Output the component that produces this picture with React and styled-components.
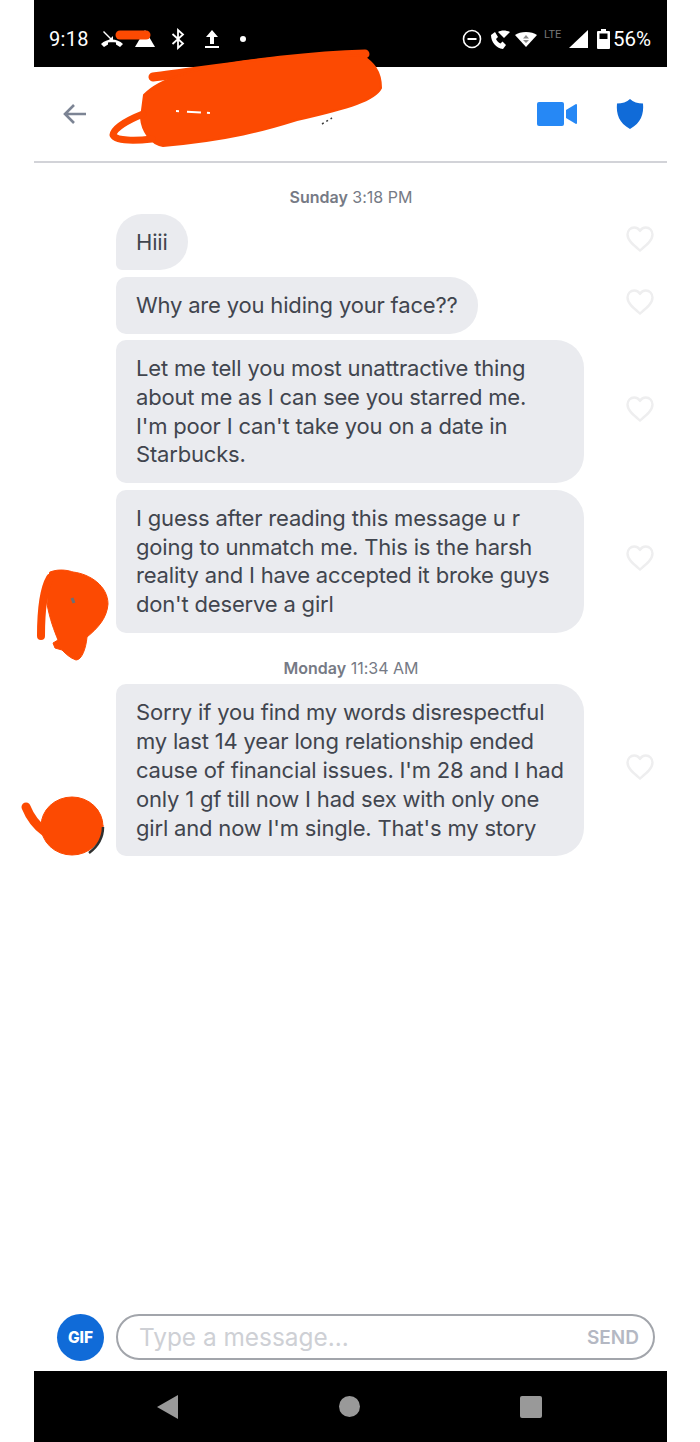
import React from 'react';
import styled, { createGlobalStyle } from 'styled-components';

const GlobalStyle = createGlobalStyle`
    html, body {
        margin: 0;
        padding: 0;
        background: #fff;
    }
    body {
        font-family: "Inter", "Liberation Sans", sans-serif;
        font-variant-ligatures: none;
    }
`;

const threads = [
    {
        day: 'Sunday',
        time: '3:18 PM',
        messages: [
            { id: 1, lines: ['Hiii'], first: true },
            { id: 2, lines: ['Why are you hiding your face??'] },
            {
                id: 3,
                lines: [
                    'Let me tell you most unattractive thing',
                    'about me as I can see you starred me.',
                    "I'm poor I can't take you on a date in",
                    'Starbucks.',
                ],
                wide: true,
            },
            {
                id: 4,
                lines: [
                    'I guess after reading this message u r',
                    'going to unmatch me. This is the harsh',
                    'reality and I have accepted it broke guys',
                    "don't deserve a girl",
                ],
                wide: true,
            },
        ],
    },
    {
        day: 'Monday',
        time: '11:34 AM',
        messages: [
            {
                id: 5,
                lines: [
                    'Sorry if you find my words disrespectful',
                    'my last 14 year long relationship ended',
                    "cause of financial issues. I'm 28 and I had",
                    'only 1 gf till now I had sex with only one',
                    "girl and now I'm single. That's my story",
                ],
                wide: true,
            },
        ],
    },
];

function HeartIcon() {
    return (
        <svg width="30" height="28" viewBox="0 0 30 28" fill="none">
            <path
                d="M15 25.5 C9 20.5 2.5 15.5 2.5 9.5 C2.5 5.5 5.5 2.5 9.2 2.5 C11.6 2.5 13.8 3.8 15 6 C16.2 3.8 18.4 2.5 20.8 2.5 C24.5 2.5 27.5 5.5 27.5 9.5 C27.5 15.5 21 20.5 15 25.5 Z"
                stroke="#eeeeef"
                strokeWidth="2.4"
                strokeLinejoin="round"
            />
        </svg>
    );
}

function App() {
    return (
        <Page>
            <GlobalStyle />
            <Phone>
                <StatusBar>
                    <StatusGroup>
                        <Clock>9:18</Clock>
                        <StatusIcon $left={11}>
                            <svg width="56" height="20" viewBox="0 0 56 20" fill="#fff">
                                <path d="M1 15 C7 9 17 9 23 15 L20 18 L16 15.5 V13.5 C14 13 10 13 8 13.5 V15.5 L4 18 Z" />
                                <path d="M4 2 L11 9 L13 7 V12 H8 L10 10 L3 3 Z" />
                                <path d="M35 18 L45 1 L55 18 Z" />
                            </svg>
                        </StatusIcon>
                        <StatusIcon $left={15}>
                            <svg width="14" height="22" viewBox="0 0 14 22" fill="none">
                                <path d="M1.5 6 L12 15.5 L7 20 V2 L12 6.5 L1.5 16" stroke="#fff" strokeWidth="1.8" />
                            </svg>
                        </StatusIcon>
                        <StatusIcon $left={19}>
                            <svg width="16" height="20" viewBox="0 0 16 20" fill="#fff">
                                <path d="M8 1 L14 8 L10 8 L10 15 L6 15 L6 8 L2 8 Z" />
                                <rect x="1" y="17" width="14" height="2" />
                            </svg>
                        </StatusIcon>
                        <Dot />
                    </StatusGroup>
                    <StatusGroup>
                        <svg width="20" height="20" viewBox="0 0 20 20" fill="none">
                            <circle cx="10" cy="10" r="8.5" stroke="#fff" strokeWidth="1.6" />
                            <rect x="5.5" y="9" width="9" height="2" fill="#fff" />
                        </svg>
                        <StatusIcon $left={8}>
                            <svg width="48" height="20" viewBox="0 0 48 20" fill="#fff">
                                <path d="M1 6 L5 3 L8 8 L6 10 C7 12 8.5 13.5 10.5 14.5 L12.5 12.5 L16 16 L13 20 C6 19 1 13 1 6 Z" />
                                <path d="M8 3 C11 1 16 1 20 3 L14 9 Z" />
                                <path d="M25 6 C30 2 42 2 47 6 L36 18 Z" />
                                <path d="M36 6 L39 9.5 H33 Z M33 11 H39 L36 14 Z" fill="#8b8b8b" />
                            </svg>
                        </StatusIcon>
                        <Lte>LTE</Lte>
                        <StatusIcon $left={3}>
                            <svg width="19" height="20" viewBox="0 0 19 20" fill="#fff">
                                <path d="M0 19 L19 1 L19 19 Z" />
                            </svg>
                        </StatusIcon>
                        <StatusIcon $left={9}>
                            <svg width="13" height="20" viewBox="0 0 13 20" fill="#fff">
                                <path d="M4 0 H9 V2 H12 A1 1 0 0 1 13 3 V19 A1 1 0 0 1 12 20 H1 A1 1 0 0 1 0 19 V3 A1 1 0 0 1 1 2 H4 Z M2.5 4.5 V10 H10.5 V4.5 Z" fillRule="evenodd" />
                            </svg>
                        </StatusIcon>
                        <Percent>56%</Percent>
                    </StatusGroup>
                </StatusBar>

                <Header>
                    <svg width="26" height="24" viewBox="0 0 26 24" fill="none">
                        <path d="M24 12 H3 M12 3 L3 12 L12 21" stroke="#7c8494" strokeWidth="2.6" />
                    </svg>
                    <HeaderActions>
                        <svg width="40" height="24" viewBox="0 0 40 24" fill="#2688f5">
                            <rect x="0" y="0" width="27" height="24" rx="2" />
                            <path d="M29 8 L39 2 A1 1 0 0 1 40 3 V21 A1 1 0 0 1 39 22 L29 16 Z" />
                        </svg>
                        <svg width="28" height="30" viewBox="0 0 28 30" fill="#106bd8">
                            <path d="M14 0 C17 3 22 4.5 27 4.5 C28 15 25 24 14 30 C3 24 0 15 1 4.5 C6 4.5 11 3 14 0 Z" />
                        </svg>
                    </HeaderActions>
                </Header>

                <Thread>
                    {threads.map((group) => (
                        <Group key={group.day}>
                            <Stamp>
                                <strong>{group.day}</strong> {group.time}
                            </Stamp>
                            {group.messages.map((message) => (
                                <Row key={message.id}>
                                    <Bubble $wide={message.wide} $first={message.first}>
                                        {message.lines.map((line) => (
                                            <BubbleLine key={line}>{line}</BubbleLine>
                                        ))}
                                    </Bubble>
                                    <HeartSlot>
                                        <HeartIcon />
                                    </HeartSlot>
                                </Row>
                            ))}
                        </Group>
                    ))}
                </Thread>

                <Composer>
                    <GifButton>GIF</GifButton>
                    <MessageBox>
                        <Placeholder>Type a message...</Placeholder>
                        <SendLabel>SEND</SendLabel>
                    </MessageBox>
                </Composer>

                <NavBar>
                    <svg width="22" height="24" viewBox="0 0 22 24" fill="#999">
                        <path d="M21 0 V24 L0 12 Z" />
                    </svg>
                    <NavCircle />
                    <NavSquare />
                </NavBar>
            </Phone>

            <Scribble width="700" height="870" viewBox="0 0 700 870" fill="none">
                <g fill="#fc4a02" stroke="#fc4a02" strokeLinecap="round" strokeLinejoin="round">
                    <path d="M120 35 H146" strokeWidth="9" />
                    <path d="M153 77 C210 70 290 56 365 54" strokeWidth="9" fill="none" />
                    <path d="M144 95 C165 72 230 60 313 55 L363 56 C372 62 381 70 381 88 C375 100 350 108 297 120 C265 130 230 140 163 146 C150 144 142 130 141 118 Z" strokeWidth="2" />
                    <path d="M143 114 C128 120 114 128 113 135 C116 141 135 141 152 139" strokeWidth="7" fill="none" />
                    <path d="M50 572 C60 568 70 571 73 572 C90 574 108 586 108 604 C107 618 98 628 87 637 C86 648 82 660 76 660 C70 658 66 654 62 650 L55 648 L53 643 L58 640 C54 630 50 620 47 604 Z" strokeWidth="1" />
                    <path d="M50 578 C43 590 41 615 41 636" strokeWidth="8" fill="none" />
                    <ellipse cx="72" cy="826" rx="31" ry="29" strokeWidth="1" />
                    <path d="M26 807 C30 817 37 826 45 832" strokeWidth="9" fill="none" />
                </g>
                <path d="M72 598 L74 603" stroke="#6b6f76" strokeWidth="3" />
                <path d="M103 827 C103 838 97 847 89 853" stroke="#30302f" strokeWidth="2.5" />
                <path d="M176 111 L210 113" stroke="#ffffff" strokeWidth="2" strokeDasharray="3 8 14 6 3 20" />
                <path d="M322 124 L332 118" stroke="#3a3a3a" strokeWidth="1.5" strokeDasharray="2 3" />
            </Scribble>
        </Page>
    );
}

const Page = styled.div`
    position: relative;
    width: 700px;
    height: 1442px;
    padding: 0 33px 0 34px;
    box-sizing: border-box;
    background-color: #fff;
    overflow: hidden;
`;

const Phone = styled.div`
    display: flex;
    flex-direction: column;
    height: 100%;
`;

const StatusBar = styled.div`
    display: flex;
    align-items: center;
    justify-content: space-between;
    height: 67px;
    padding: 11px 16px 0 15px;
    box-sizing: border-box;
    flex-shrink: 0;
    background-color: #000;
    color: #fff;
`;

const StatusGroup = styled.div`
    display: flex;
    align-items: center;
`;

const StatusIcon = styled.span`
    display: flex;
    margin-left: ${(props) => props.$left}px;
`;

const Clock = styled.span`
    font-family: "Roboto", "Liberation Sans", sans-serif;
    font-size: 20px;
    letter-spacing: 0.3px;
`;

const Dot = styled.span`
    width: 6px;
    height: 6px;
    margin-left: 20px;
    border-radius: 50%;
    background-color: #fff;
`;

const Lte = styled.span`
    width: 22px;
    margin: -10px 0 0 6px;
    font-family: "Roboto", "Liberation Sans", sans-serif;
    font-size: 11px;
    color: #777;
`;

const Percent = styled.span`
    margin-left: 3px;
    font-family: "Roboto", "Liberation Sans", sans-serif;
    font-size: 20.5px;
`;

const Header = styled.div`
    display: flex;
    align-items: center;
    justify-content: space-between;
    height: 96px;
    padding: 0 23px 0 28px;
    box-sizing: border-box;
    flex-shrink: 0;
    border-bottom: 2px solid #d2d3d8;
`;

const HeaderActions = styled.div`
    display: flex;
    align-items: center;
    gap: 39px;
`;

const Thread = styled.div`
    display: flex;
    flex: 1;
    flex-direction: column;
    gap: 25px;
    padding: 24px 12px 0 82px;
`;

const Group = styled.div`
    display: flex;
    flex-direction: column;
    gap: 6.5px;
`;

const Stamp = styled.div`
    height: 20px;
    padding-right: 69px;
    font-size: 16px;
    line-height: 20px;
    text-align: center;
    color: #767a85;

    strong {
        font-weight: 600;
    }
`;

const Row = styled.div`
    display: flex;
    align-items: center;
    justify-content: space-between;
`;

const Bubble = styled.div`
    width: ${(props) => (props.$wide ? '468px' : 'fit-content')};
    padding: 14px 20px;
    box-sizing: border-box;
    border-radius: ${(props) => (props.$first ? '26px' : '10px')} 28px 28px ${(props) => (props.$first ? '6px' : '10px')};
    background-color: #eaebef;
    font-size: 22px;
    letter-spacing: -0.18px;
    line-height: 28.8px;
    color: #41454e;
`;

const BubbleLine = styled.div`
    white-space: nowrap;
`;

const HeartSlot = styled.div`
    display: flex;
    margin-bottom: 6px;
`;

const Composer = styled.div`
    display: flex;
    align-items: center;
    gap: 12px;
    height: 46px;
    margin-bottom: 11px;
    padding: 0 12px 0 23px;
    flex-shrink: 0;
`;

const GifButton = styled.div`
    display: flex;
    align-items: center;
    justify-content: center;
    width: 47px;
    height: 47px;
    border-radius: 50%;
    flex-shrink: 0;
    background-color: #106bd8;
    font-size: 15.5px;
    font-weight: 800;
    color: #fff;
`;

const MessageBox = styled.div`
    display: flex;
    flex: 1;
    align-items: center;
    justify-content: space-between;
    height: 46px;
    padding: 0 14px 0 21px;
    box-sizing: border-box;
    border: 2px solid #a2a5ab;
    border-radius: 23px;
`;

const Placeholder = styled.span`
    font-size: 24.4px;
    color: #ced0d5;
`;

const SendLabel = styled.span`
    font-size: 19px;
    font-weight: 600;
    color: #b4b8c3;
`;

const NavBar = styled.div`
    display: flex;
    align-items: center;
    justify-content: space-between;
    height: 71px;
    padding: 0 125px 0 123px;
    box-sizing: border-box;
    flex-shrink: 0;
    background-color: #000;
`;

const NavCircle = styled.span`
    width: 21px;
    height: 21px;
    border-radius: 50%;
    background-color: #999;
`;

const NavSquare = styled.span`
    width: 22px;
    height: 22px;
    border-radius: 2px;
    background-color: #999;
`;

const Scribble = styled.svg`
    position: absolute;
    top: 0;
    left: 0;
    pointer-events: none;
`;

export default App;
